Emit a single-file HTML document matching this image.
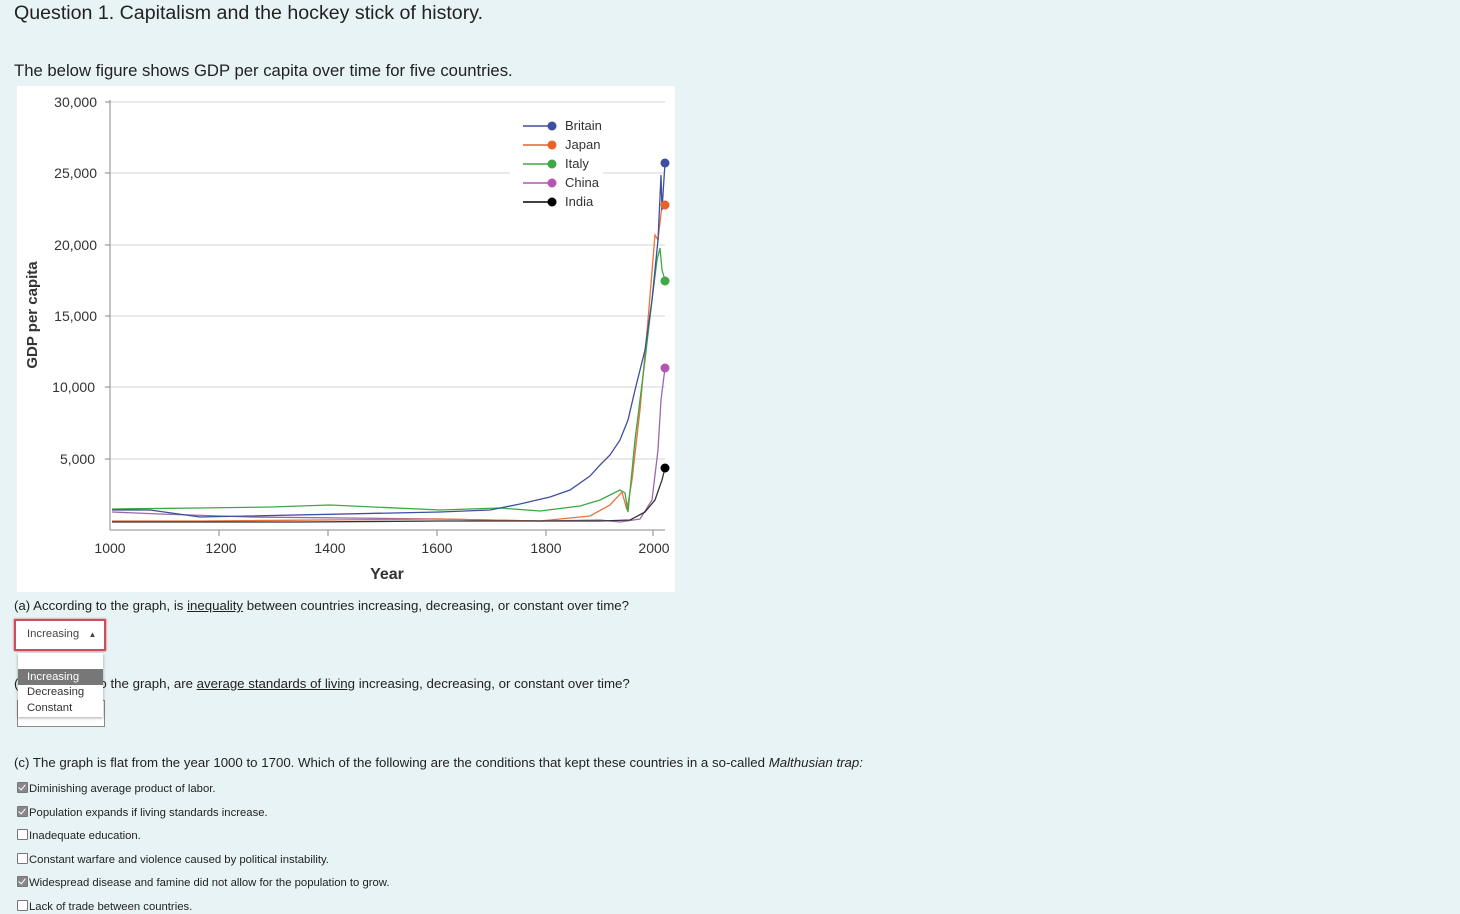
<!DOCTYPE html>
<html><head><meta charset="utf-8"><style>
body{margin:0;width:1460px;height:914px;background:#e8f3f5;font-family:"Liberation Sans","DejaVu Sans",sans-serif;color:#222;position:relative;overflow:hidden}
.a{position:absolute;white-space:nowrap}
.s{font-size:13.25px}
.c{font-size:11.3px}
.cb{display:inline-block;width:9px;height:9px;border:1px solid #777;background:#fff;vertical-align:-1px;margin-right:1px;border-radius:1px;position:relative}
.cb.k{background:#888;border-color:#777}
.cb.k::after{content:"";position:absolute;left:2px;top:0px;width:3px;height:6px;border:solid #fff;border-width:0 1.5px 1.5px 0;transform:rotate(40deg)}
u{text-decoration:underline}
</style></head><body>
<div class="a" style="left:14px;top:2px;font-size:19.6px">Question 1. Capitalism and the hockey stick of history.</div>
<div class="a" style="left:14px;top:61px;font-size:16.7px">The below figure shows GDP per capita over time for five countries.</div>
<svg class="a" style="left:17px;top:86px" width="658" height="506" viewBox="17 86 658 506">
<rect x="17" y="86" width="658" height="506" fill="#fff"/>
<g stroke="#d6d6d6" stroke-width="1">
<line x1="110" y1="102" x2="665" y2="102"/><line x1="110" y1="173" x2="510" y2="173"/><line x1="603" y1="173" x2="665" y2="173"/>
<line x1="110" y1="245" x2="665" y2="245"/><line x1="110" y1="316" x2="665" y2="316"/>
<line x1="110" y1="387" x2="665" y2="387"/><line x1="110" y1="459" x2="665" y2="459"/>
</g>
<g stroke="#888" stroke-width="1"><line x1="110" y1="100" x2="110" y2="530"/><line x1="110" y1="530" x2="665" y2="530"/>
<line x1="105" y1="102" x2="110" y2="102"/><line x1="105" y1="173" x2="110" y2="173"/><line x1="105" y1="245" x2="110" y2="245"/><line x1="105" y1="316" x2="110" y2="316"/><line x1="105" y1="387" x2="110" y2="387"/><line x1="105" y1="459" x2="110" y2="459"/>
<line x1="219" y1="530" x2="219" y2="536"/><line x1="328" y1="530" x2="328" y2="536"/><line x1="437" y1="530" x2="437" y2="536"/><line x1="546" y1="530" x2="546" y2="536"/><line x1="653" y1="530" x2="653" y2="536"/></g>
<g font-size="14" fill="#333" text-anchor="end">
<text x="97" y="107">30,000</text><text x="97" y="178">25,000</text><text x="97" y="250">20,000</text><text x="97" y="321">15,000</text><text x="95" y="392">10,000</text><text x="95" y="464">5,000</text></g>
<g font-size="14" fill="#333" text-anchor="middle">
<text x="110" y="553">1000</text><text x="221" y="553">1200</text><text x="330" y="553">1400</text><text x="437" y="553">1600</text><text x="546" y="553">1800</text><text x="654" y="553">2000</text></g>
<text x="387" y="579" font-size="16" font-weight="bold" fill="#333" text-anchor="middle">Year</text>
<text transform="translate(37,315) rotate(-90)" font-size="15" font-weight="bold" fill="#333" text-anchor="middle">GDP per capita</text>
<g fill="none" stroke-width="1.3">
<polyline stroke="#9a6aa8" points="112,512 160,514 250,517 440,519 540,521 600,520 620,522 640,519 652,500 658,450 661,400 665,368"/>
<polyline stroke="#e8733a" points="112,521 200,521 440,519 540,521 590,516 610,505 622,492 627,510 632,480 640,410 648,320 655,235 658,240 662,205 665,205"/>
<polyline stroke="#3da845" points="112,509 200,508 270,507 330,505 440,510 500,508 540,511 580,506 600,500 620,490 625,493 628,512 635,440 645,360 652,300 657,260 660,248 662,270 665,280"/>
<polyline stroke="#3c4fa0" points="112,510 150,510 200,517 440,512 490,510 520,504 550,497 570,490 590,476 600,465 610,455 620,440 628,420 635,390 645,350 652,300 658,240 661,175 662,210 665,163"/>
<polyline stroke="#333" points="112,522 300,522 440,521 540,521 600,521 630,520 645,512 655,500 662,480 665,468"/>
</g>
<circle cx="665" cy="163" r="4.5" fill="#3c4fa0"/><circle cx="665" cy="205" r="4.5" fill="#e8602a"/><circle cx="665" cy="281" r="4.5" fill="#3da845"/><circle cx="665" cy="368" r="4.5" fill="#b455b0"/><circle cx="665" cy="468" r="4.5" fill="#000"/>
<g stroke-width="1.5">
<line x1="523" y1="126" x2="551" y2="126" stroke="#3c4fa0"/><circle cx="552" cy="126" r="4.5" fill="#3c4fa0"/>
<line x1="523" y1="145" x2="551" y2="145" stroke="#e8602a"/><circle cx="552" cy="145" r="4.5" fill="#e8602a"/>
<line x1="523" y1="164" x2="551" y2="164" stroke="#3da845"/><circle cx="552" cy="164" r="4.5" fill="#3da845"/>
<line x1="523" y1="183" x2="551" y2="183" stroke="#b455b0"/><circle cx="552" cy="183" r="4.5" fill="#b455b0"/>
<line x1="523" y1="202" x2="551" y2="202" stroke="#000"/><circle cx="552" cy="202" r="4.5" fill="#000"/>
</g>
<g font-size="13" fill="#333"><text x="565" y="130">Britain</text><text x="565" y="149">Japan</text><text x="565" y="168">Italy</text><text x="565" y="187">China</text><text x="565" y="206">India</text></g>
</svg>
<div class="a s" style="left:14px;top:598px">(a) According to the graph, is <u>inequality</u> between countries increasing, decreasing, or constant over time?</div>
<div class="a" style="left:14px;top:619px;width:88px;height:28px;border:2px solid #c9505a;background:#fff;box-shadow:0 0 2px #c9505a"></div>
<div class="a c" style="left:27px;top:628px;color:#444">Increasing &nbsp;&nbsp;<span style="font-size:8px">&#9650;</span></div>
<div class="a s" style="left:14px;top:676px">(b) According to the graph, are <u>average standards of living</u> increasing, decreasing, or constant over time?</div>
<div class="a" style="left:17px;top:700px;width:86px;height:25px;border:1px solid #888;background:#fff"></div>
<div class="a" style="left:18px;top:653px;width:85px;height:64px;background:#fff;box-shadow:0 1px 3px rgba(0,0,0,.35)">
<div class="c" style="position:absolute;top:16px;left:0;width:85px;height:16px;background:#777;color:#fff;line-height:16px;padding-left:9px;box-sizing:border-box">Increasing</div>
<div class="c" style="position:absolute;top:33px;left:9px;color:#333">Decreasing</div>
<div class="c" style="position:absolute;top:49px;left:9px;color:#333">Constant</div>
</div>
<div class="a s" style="left:14px;top:755px">(c) The graph is flat from the year 1000 to 1700. Which of the following are the conditions that kept these countries in a so-called <i>Malthusian trap:</i></div>
<div class="a c" style="left:17px;top:782px"><span class="cb k"></span>Diminishing average product of labor.</div>
<div class="a c" style="left:17px;top:806px"><span class="cb k"></span>Population expands if living standards increase.</div>
<div class="a c" style="left:17px;top:829px"><span class="cb"></span>Inadequate education.</div>
<div class="a c" style="left:17px;top:853px"><span class="cb"></span>Constant warfare and violence caused by political instability.</div>
<div class="a c" style="left:17px;top:876px"><span class="cb k"></span>Widespread disease and famine did not allow for the population to grow.</div>
<div class="a c" style="left:17px;top:900px"><span class="cb"></span>Lack of trade between countries.</div>
</body></html>
